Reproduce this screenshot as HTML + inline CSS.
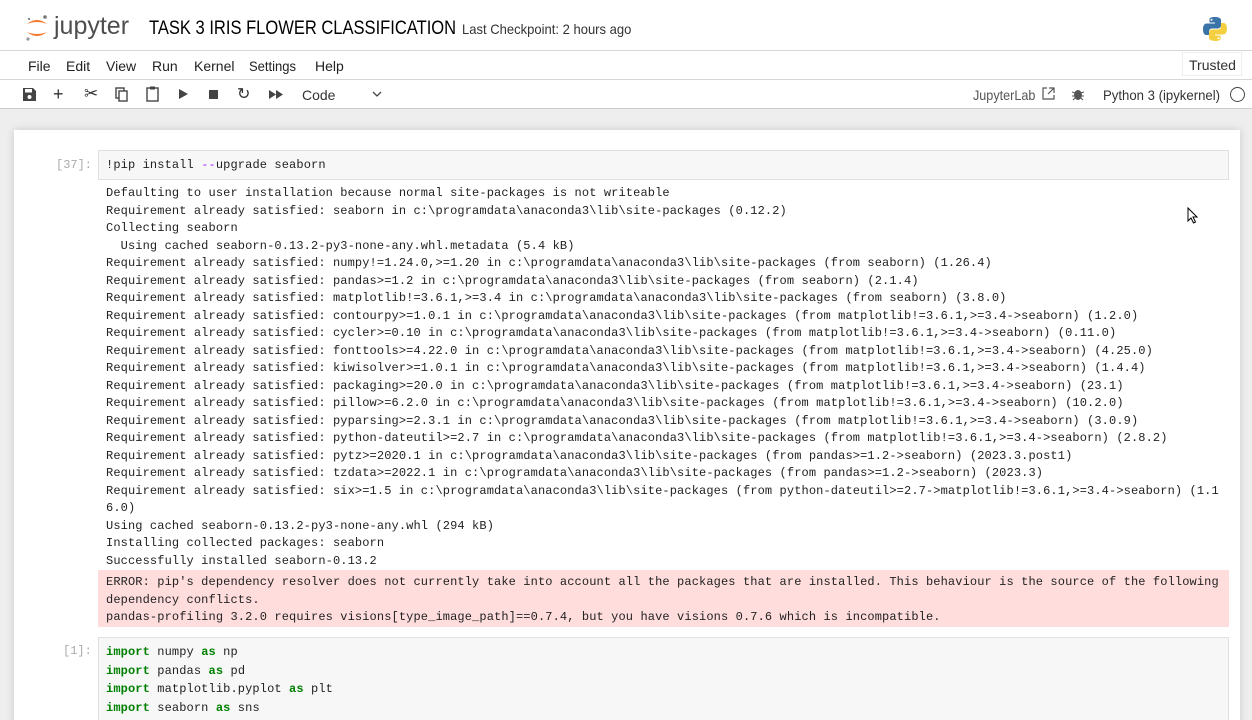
<!DOCTYPE html>
<html><head><meta charset="utf-8"><style>
*{margin:0;padding:0;box-sizing:border-box}
html,body{width:1252px;height:720px;overflow:hidden}
body{background:#eee;font-family:"Liberation Sans",sans-serif;position:relative}
#hdr{position:absolute;left:0;top:0;width:1252px;height:109px;background:#fff}
.abs{position:absolute;white-space:nowrap}
.sx{transform-origin:0 50%}
.hl{position:absolute;left:0;width:1252px;height:1px;background:#d6d6d6}
#nb{position:absolute;left:14px;top:130px;width:1226px;height:600px;background:#fff;box-shadow:0 0 8px rgba(0,0,0,.15)}
.mono{font-family:"Liberation Mono",monospace;font-size:12px;letter-spacing:0.12px;line-height:17.5px;white-space:pre;color:#222}
.prompt{position:absolute;font-family:"Liberation Mono",monospace;font-size:12px;color:#aaa}
.inp{position:absolute;left:84px;width:1131px;background:#f7f7f7;border:1px solid #e0e0e0}
.k{color:#008000;font-weight:bold}
.ic{position:absolute;top:87px;color:#333;font-size:14px}
</style></head><body>
<div id="hdr">
  <svg class="abs" style="left:24px;top:13px" width="26" height="30" viewBox="0 0 26 30">
    <path d="M3 11 Q13 3 23 11 Q13 7 3 11Z" fill="#f37726"/>
    <path d="M3 19 Q13 27 23 19 Q13 23 3 19Z" fill="#f37726"/>
    <circle cx="21" cy="4" r="1.8" fill="#767677"/><circle cx="4" cy="26" r="1.6" fill="#989798"/><circle cx="5" cy="6" r="1" fill="#616262"/>
  </svg>
  <div class="abs" style="left:54px;top:12px;font-size:25px;color:#4e4e4e">jupyter</div>
  <div class="abs sx" style="left:149px;top:18px;font-size:19px;color:#000;transform:scaleX(0.87)">TASK 3 IRIS FLOWER CLASSIFICATION</div>
  <div class="abs sx" style="left:462px;top:21px;font-size:14px;color:#333;transform:scaleX(0.93)">Last Checkpoint: 2 hours ago</div>
  <svg class="abs" style="left:1202px;top:16px" width="26" height="26" viewBox="0 0 26 26">
    <path d="M12.5 1C7 1 7.5 3.5 7.5 3.5V6.5H13V7.5H5S1 7 1 13.2 4.5 19 4.5 19H7V15.8S6.8 12.5 10.2 12.5H15.7S19 12.6 19 9.3V4.2S19.5 1 12.5 1ZM9.5 2.8A1 1 0 1 1 9.5 4.8 1 1 0 0 1 9.5 2.8Z" fill="#3a73a7"/>
    <path d="M13.5 25C19 25 18.5 22.5 18.5 22.5V19.5H13V18.5H21S25 19 25 12.8 21.5 7 21.5 7H19V10.2S19.2 13.5 15.8 13.5H10.3S7 13.4 7 16.7V21.8S6.5 25 13.5 25ZM16.5 23.2A1 1 0 1 1 16.5 21.2 1 1 0 0 1 16.5 23.2Z" fill="#f4cf3f"/>
  </svg>
  <div class="hl" style="top:50px"></div>
  <div class="abs" style="left:28px;top:58px;font-size:14px;color:#222">File</div>
  <div class="abs" style="left:66px;top:58px;font-size:14px;color:#222">Edit</div>
  <div class="abs" style="left:106px;top:58px;font-size:14px;color:#222">View</div>
  <div class="abs" style="left:152px;top:58px;font-size:14px;color:#222">Run</div>
  <div class="abs" style="left:194px;top:58px;font-size:14px;color:#222">Kernel</div>
  <div class="abs sx" style="left:249px;top:58px;font-size:14px;color:#222;transform:scaleX(0.93)">Settings</div>
  <div class="abs" style="left:315px;top:58px;font-size:14px;color:#222">Help</div>
  <div class="abs" style="left:1182px;top:52px;width:60px;height:24px;border:1px solid #eee;font-size:14px;color:#333;padding:4px 0 0 6px">Trusted</div>
  <div class="hl" style="top:79px"></div>
  <svg class="abs" style="left:23px;top:88px" width="13" height="13" viewBox="0 0 13 13"><path d="M0 0H10L13 3V13H0Z" fill="#444"/><rect x="2" y="1" width="7" height="3.5" fill="#fff"/><circle cx="6.5" cy="9" r="2" fill="#fff"/></svg>
  <div class="ic" style="left:53px;top:84px;font-size:18px">+</div>
  <div class="ic" style="left:84px;top:84px;font-size:17px">✂</div>
  <svg class="abs" style="left:115px;top:87px" width="13" height="15" viewBox="0 0 13 15"><rect x="1" y="1" width="8" height="10" fill="none" stroke="#444" stroke-width="1.4"/><rect x="4" y="4" width="8" height="10" fill="#fff" stroke="#444" stroke-width="1.4"/></svg>
  <svg class="abs" style="left:146px;top:86px" width="13" height="16" viewBox="0 0 13 16"><rect x="1" y="2" width="11" height="13" fill="none" stroke="#444" stroke-width="1.4"/><rect x="4" y="0.5" width="5" height="3" fill="#444"/></svg>
  <svg class="abs" style="left:179px;top:89px" width="9" height="10"><path d="M0 0L9 5 0 10Z" fill="#444"/></svg>
  <div class="abs" style="left:209px;top:90px;width:9px;height:9px;background:#444"></div>
  <div class="ic" style="left:237px;top:84px;font-size:16px">↻</div>
  <svg class="abs" style="left:269px;top:90px" width="14" height="9"><path d="M0 0L7 4.5 0 9ZM7 0L14 4.5 7 9Z" fill="#444"/></svg>
  <div class="abs" style="left:302px;top:87px;font-size:14px;color:#333">Code</div>
  <svg class="abs" style="left:372px;top:91px" width="10" height="7"><path d="M1 1L5 5 9 1" fill="none" stroke="#444" stroke-width="1.3"/></svg>
  <div class="abs sx" style="left:973px;top:87px;font-size:14px;color:#555;transform:scaleX(0.9)">JupyterLab</div>
  <svg class="abs" style="left:1042px;top:87px" width="13" height="13" viewBox="0 0 13 13"><path d="M5 1H1V12H12V8M7 1H12V6M12 1L6 7" fill="none" stroke="#555" stroke-width="1.2"/></svg>
  <svg class="abs" style="left:1072px;top:87px" width="12" height="14" viewBox="0 0 12 14"><ellipse cx="6" cy="8" rx="4" ry="5" fill="#555"/><path d="M0 5L3 6M12 5L9 6M0 9H2M12 9H10M1 13L3 11M11 13L9 11" stroke="#555"/></svg>
  <div class="abs sx" style="left:1103px;top:87px;font-size:14px;color:#333;transform:scaleX(0.94)">Python 3 (ipykernel)</div>
  <div class="abs" style="left:1230px;top:87px;width:15px;height:15px;border:1.5px solid #444;border-radius:50%"></div>
  <div class="hl" style="top:108px;background:#ccc"></div>
</div>
<div id="nb">
  <div class="prompt" style="left:42px;top:28px">[37]:</div>
  <div class="inp" style="top:20px;height:30px"><div class="mono" style="padding:6px 0 0 7px">!pip install <span style="color:#a2f">--</span>upgrade seaborn</div></div>
  <div class="mono" style="position:absolute;left:92px;top:55px">Defaulting to user installation because normal site-packages is not writeable
Requirement already satisfied: seaborn in c:\programdata\anaconda3\lib\site-packages (0.12.2)
Collecting seaborn
  Using cached seaborn-0.13.2-py3-none-any.whl.metadata (5.4 kB)
Requirement already satisfied: numpy!=1.24.0,>=1.20 in c:\programdata\anaconda3\lib\site-packages (from seaborn) (1.26.4)
Requirement already satisfied: pandas>=1.2 in c:\programdata\anaconda3\lib\site-packages (from seaborn) (2.1.4)
Requirement already satisfied: matplotlib!=3.6.1,>=3.4 in c:\programdata\anaconda3\lib\site-packages (from seaborn) (3.8.0)
Requirement already satisfied: contourpy>=1.0.1 in c:\programdata\anaconda3\lib\site-packages (from matplotlib!=3.6.1,>=3.4->seaborn) (1.2.0)
Requirement already satisfied: cycler>=0.10 in c:\programdata\anaconda3\lib\site-packages (from matplotlib!=3.6.1,>=3.4->seaborn) (0.11.0)
Requirement already satisfied: fonttools>=4.22.0 in c:\programdata\anaconda3\lib\site-packages (from matplotlib!=3.6.1,>=3.4->seaborn) (4.25.0)
Requirement already satisfied: kiwisolver>=1.0.1 in c:\programdata\anaconda3\lib\site-packages (from matplotlib!=3.6.1,>=3.4->seaborn) (1.4.4)
Requirement already satisfied: packaging>=20.0 in c:\programdata\anaconda3\lib\site-packages (from matplotlib!=3.6.1,>=3.4->seaborn) (23.1)
Requirement already satisfied: pillow>=6.2.0 in c:\programdata\anaconda3\lib\site-packages (from matplotlib!=3.6.1,>=3.4->seaborn) (10.2.0)
Requirement already satisfied: pyparsing>=2.3.1 in c:\programdata\anaconda3\lib\site-packages (from matplotlib!=3.6.1,>=3.4->seaborn) (3.0.9)
Requirement already satisfied: python-dateutil>=2.7 in c:\programdata\anaconda3\lib\site-packages (from matplotlib!=3.6.1,>=3.4->seaborn) (2.8.2)
Requirement already satisfied: pytz>=2020.1 in c:\programdata\anaconda3\lib\site-packages (from pandas>=1.2->seaborn) (2023.3.post1)
Requirement already satisfied: tzdata>=2022.1 in c:\programdata\anaconda3\lib\site-packages (from pandas>=1.2->seaborn) (2023.3)
Requirement already satisfied: six>=1.5 in c:\programdata\anaconda3\lib\site-packages (from python-dateutil>=2.7->matplotlib!=3.6.1,>=3.4->seaborn) (1.1
6.0)
Using cached seaborn-0.13.2-py3-none-any.whl (294 kB)
Installing collected packages: seaborn
Successfully installed seaborn-0.13.2</div>
  <div style="position:absolute;left:84px;top:440px;width:1131px;height:57px;background:#fdd"><div class="mono" style="padding:4px 0 0 8px">ERROR: pip's dependency resolver does not currently take into account all the packages that are installed. This behaviour is the source of the following
dependency conflicts.
pandas-profiling 3.2.0 requires visions[type_image_path]==0.7.4, but you have visions 0.7.6 which is incompatible.</div></div>
  <div class="prompt" style="left:49px;top:514px">[1]:</div>
  <div class="inp" style="top:507px;height:100px"><div class="mono" style="padding:5px 0 0 7px;line-height:18.5px"><span class="k">import</span> numpy <span class="k">as</span> np
<span class="k">import</span> pandas <span class="k">as</span> pd
<span class="k">import</span> matplotlib.pyplot <span class="k">as</span> plt
<span class="k">import</span> seaborn <span class="k">as</span> sns</div></div>
</div>
<svg class="abs" style="left:1187px;top:207px" width="11" height="17" viewBox="0 0 11 17"><path d="M1 1V14L4 11 6.5 16 8.5 15 6 10H10Z" fill="#fff" stroke="#000" stroke-width="1"/></svg>
</body></html>
